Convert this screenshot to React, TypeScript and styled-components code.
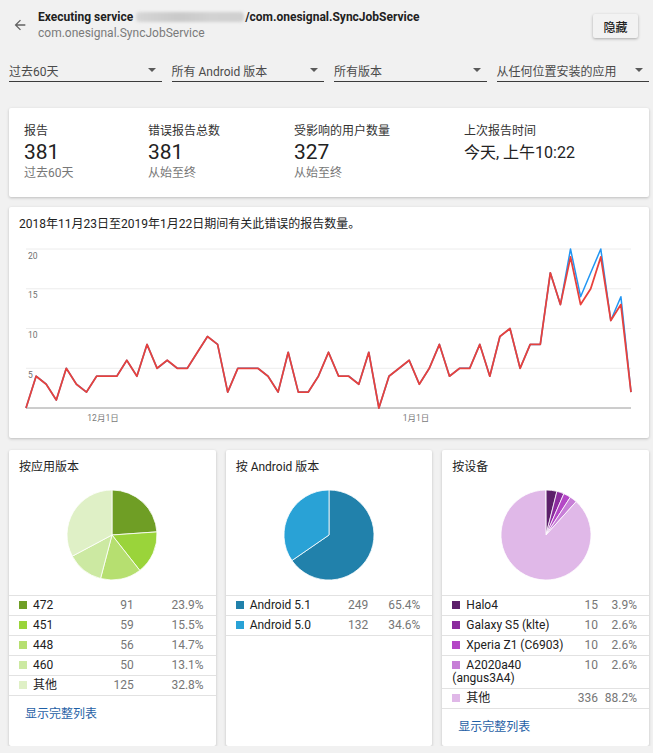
import React from 'react';
import styled, { createGlobalStyle } from 'styled-components';

const GlobalStyle = createGlobalStyle`
  html, body { margin: 0; padding: 0; background: #f1f1f1; }
  body {
    font-family: Roboto, "Noto Sans CJK SC", "Noto Sans", sans-serif;
    color: #212121;
    font-size: 12px;
  }
  * { box-sizing: border-box; }
`;

const Page = styled.div`
  width: 653px;
  padding: 0 4px 0 9px;
`;

const Header = styled.header`
  display: flex;
  align-items: flex-start;
  height: 59px;
  padding-top: 9px;
`;

const BackIcon = styled.svg`
  width: 16px;
  height: 16px;
  margin: 8px 10px 0 3px;
  fill: #616161;
  flex: none;
`;

const TitleBlock = styled.div`
  flex: 1;
  min-width: 0;
`;

const Title = styled.div`
  font-size: 12px;
  font-weight: 700;
  line-height: 16px;
  color: #212121;
  white-space: nowrap;
`;

const Redacted = styled.span`
  display: inline-block;
  width: 108px;
  height: 10px;
  margin: 0 1px 0 3px;
  vertical-align: -1px;
  background: linear-gradient(90deg, #d6d6d6, #c9c9c9 40%, #d2d2d2 70%, #cfcfcf);
  filter: blur(1.5px);
  border-radius: 4px;
`;

const Subtitle = styled.div`
  font-size: 12px;
  line-height: 16px;
  color: #7a7a7a;
`;

const HideButton = styled.button`
  margin: 5px 11px 0 0;
  width: 45px;
  height: 24px;
  border: none;
  border-radius: 2px;
  background: #f2f2f2;
  box-shadow: 0 1px 3px rgba(0, 0, 0, 0.3);
  font-family: inherit;
  font-size: 12px;
  font-weight: 500;
  color: #212121;
  padding: 0;
`;

const FilterRow = styled.div`
  display: grid;
  grid-template-columns: repeat(4, 1fr);
  column-gap: 10px;
`;

const Dropdown = styled.div`
  height: 23px;
  display: flex;
  align-items: center;
  justify-content: space-between;
  border-bottom: 1px solid #3c3c3c;
  font-size: 12px;
  color: #4a4a4a;
  padding-right: 6px;
`;

const Caret = styled.span`
  width: 0;
  height: 0;
  border-left: 4px solid transparent;
  border-right: 4px solid transparent;
  border-top: 4px solid #5a5a5a;
`;

const Card = styled.section`
  background: #fff;
  border-radius: 2px;
  box-shadow: 0 1px 3px rgba(0, 0, 0, 0.22);
`;

const StatsCard = styled(Card)`
  margin-top: 26px;
  height: 89px;
  padding: 15px 15px 0;
  display: grid;
  grid-template-columns: 124px 146px 170px 1fr;
`;

const Stat = styled.div``;

const StatLabel = styled.div`
  font-size: 12px;
  line-height: 17px;
  color: #333;
`;

const StatValue = styled.div<{ $small?: boolean }>`
  font-size: ${(p) => (p.$small ? '16px' : '21px')};
  line-height: 25px;
  color: #222;
`;

const StatSub = styled.div`
  font-size: 12px;
  line-height: 16px;
  color: #777;
`;

const ChartCard = styled(Card)`
  margin-top: 10px;
  height: 231px;
  padding-top: 10px;
`;

const CardTitle = styled.div`
  font-size: 12px;
  line-height: 15px;
  color: #222;
  padding-left: 10px;
`;

const ChartSvg = styled.svg`
  display: block;
  width: 640px;
  height: 206px;
`;

const PieRow = styled.div`
  margin-top: 12px;
  display: grid;
  grid-template-columns: repeat(3, 1fr);
  column-gap: 10px;
`;

const PieCard = styled(Card)`
  height: 296px;
  padding-top: 10px;
`;

const PieArea = styled.div`
  height: 120px;
  display: flex;
  align-items: center;
  justify-content: center;
`;

const Legend = styled.div`
  border-bottom: 1px solid #e2e2e2;
`;

const LegendRow = styled.div<{ $cols: string }>`
  display: grid;
  grid-template-columns: ${(p) => p.$cols};
  border-top: 1px solid #e2e2e2;
  padding: 3px 12px 3px 10px;
  font-size: 12px;
  line-height: 13px;
`;

const LegendLabel = styled.div`
  color: #212121;
`;

const Swatch = styled.span<{ $color: string }>`
  display: inline-block;
  width: 8px;
  height: 8px;
  margin-right: 6px;
  background: ${(p) => p.$color};
  vertical-align: 0;
`;

const Num = styled.div`
  text-align: right;
  color: #767676;
`;

const FullListLink = styled.a`
  display: block;
  margin: 10px 0 0 16px;
  font-size: 12px;
  line-height: 16px;
  color: #1f5fa6;
  text-decoration: none;
`;

type Item = { label: string; count: number; pct: string; color: string };

const appVersions: Item[] = [
  { label: '472', count: 91, pct: '23.9%', color: '#6f9e25' },
  { label: '451', count: 59, pct: '15.5%', color: '#9ad43a' },
  { label: '448', count: 56, pct: '14.7%', color: '#b6df70' },
  { label: '460', count: 50, pct: '13.1%', color: '#cce9a2' },
  { label: '其他', count: 125, pct: '32.8%', color: '#dff0c6' },
];

const androidVersions: Item[] = [
  { label: 'Android 5.1', count: 249, pct: '65.4%', color: '#2181ab' },
  { label: 'Android 5.0', count: 132, pct: '34.6%', color: '#29a2d6' },
];

const devices: Item[] = [
  { label: 'Halo4', count: 15, pct: '3.9%', color: '#5c1f6a' },
  { label: 'Galaxy S5 (klte)', count: 10, pct: '2.6%', color: '#8b2c9e' },
  { label: 'Xperia Z1 (C6903)', count: 10, pct: '2.6%', color: '#b447c6' },
  { label: 'A2020a40 (angus3A4)', count: 10, pct: '2.6%', color: '#c77fd7' },
  { label: '其他', count: 336, pct: '88.2%', color: '#e0b8e8' },
];

const red = [
  0, 4, 3, 1, 5, 3, 2, 4, 4, 4, 6, 4, 8, 5, 6, 5, 5, 7, 9, 8, 2, 5, 5, 5, 4, 2, 7, 2, 2, 4, 7,
  4, 4, 3, 7, 0, 4, 5, 6, 3, 5, 8, 4, 5, 5, 8, 4, 9, 10, 5, 8, 8, 17, 13, 19, 13, 15, 19, 11, 13, 2,
];
const blue = red.map((v, i) => {
  const o: Record<number, number> = { 54: 20, 55: 14, 56: 17, 57: 20, 59: 14 };
  return o[i] ?? v;
});

const X0 = 17;
const X1 = 622;
const Y0 = 176;
const UNIT = 7.95;
const px = (i: number) => X0 + (i * (X1 - X0)) / 60;
const py = (v: number) => Y0 - v * UNIT;
const linePoints = (d: number[]) => d.map((v, i) => `${px(i).toFixed(1)},${py(v).toFixed(1)}`).join(' ');

function slicePath(cx: number, cy: number, r: number, a0: number, a1: number) {
  const t0 = a0 * 2 * Math.PI - Math.PI / 2;
  const t1 = a1 * 2 * Math.PI - Math.PI / 2;
  const x0 = cx + r * Math.cos(t0);
  const y0 = cy + r * Math.sin(t0);
  const x1 = cx + r * Math.cos(t1);
  const y1 = cy + r * Math.sin(t1);
  const large = a1 - a0 > 0.5 ? 1 : 0;
  return `M${cx} ${cy} L${x0.toFixed(2)} ${y0.toFixed(2)} A${r} ${r} 0 ${large} 1 ${x1.toFixed(2)} ${y1.toFixed(2)} Z`;
}

function Pie({ items }: { items: Item[] }) {
  let acc = 0;
  return (
    <svg width="92" height="92" viewBox="0 0 92 92">
      {items.map((it) => {
        const f = parseFloat(it.pct) / 100;
        const d = slicePath(46, 46, 45, acc, acc + f);
        acc += f;
        return <path key={it.label} d={d} fill={it.color} stroke="#fff" strokeWidth="0.8" strokeLinejoin="round" />;
      })}
    </svg>
  );
}

function BreakdownCard({ title, items, cols, link }: { title: string; items: Item[]; cols: string; link?: boolean }) {
  return (
    <PieCard>
      <CardTitle>{title}</CardTitle>
      <PieArea>
        <Pie items={items} />
      </PieArea>
      <Legend>
        {items.map((it) => (
          <LegendRow key={it.label} $cols={cols}>
            <LegendLabel>
              <Swatch $color={it.color} />
              {it.label}
            </LegendLabel>
            <Num>{it.count}</Num>
            <Num>{it.pct}</Num>
          </LegendRow>
        ))}
      </Legend>
      {link && <FullListLink href="#">显示完整列表</FullListLink>}
    </PieCard>
  );
}

function TrendChart() {
  const grid = [20, 15, 10, 5];
  return (
    <ChartSvg viewBox="0 0 640 206">
      {grid.map((g) => (
        <g key={g}>
          <line x1={X0} x2={X1} y1={py(g)} y2={py(g)} stroke="#ececec" strokeWidth="1" />
          <text x={X0 + 2} y={py(g) + 9.5} fontSize="8.5" fill="#6f6f6f" fontFamily="Roboto, sans-serif">
            {g}
          </text>
        </g>
      ))}
      <line x1={X0} x2={X1} y1={Y0} y2={Y0} stroke="#9a9a9a" strokeWidth="1" />
      <polyline points={linePoints(blue)} fill="none" stroke="#2196f3" strokeWidth="1.5" strokeLinejoin="round" />
      <polyline points={linePoints(red)} fill="none" stroke="#e8413c" strokeWidth="1.8" strokeLinejoin="round" />
      <text x={94} y={189} fontSize="8.5" fill="#7a7a7a" textAnchor="middle" fontFamily="Roboto, 'Noto Sans CJK SC', sans-serif">
        12月1日
      </text>
      <text x={407} y={189} fontSize="8.5" fill="#7a7a7a" textAnchor="middle" fontFamily="Roboto, 'Noto Sans CJK SC', sans-serif">
        1月1日
      </text>
    </ChartSvg>
  );
}

export default function App() {
  return (
    <>
      <GlobalStyle />
      <Page>
        <Header>
          <BackIcon viewBox="0 0 24 24">
            <path d="M20 11H7.83l5.59-5.59L12 4l-8 8 8 8 1.41-1.41L7.83 13H20v-2z" />
          </BackIcon>
          <TitleBlock>
            <Title>
              Executing service
              <Redacted />
              /com.onesignal.SyncJobService
            </Title>
            <Subtitle>com.onesignal.SyncJobService</Subtitle>
          </TitleBlock>
          <HideButton>隐藏</HideButton>
        </Header>

        <FilterRow>
          {['过去60天', '所有 Android 版本', '所有版本', '从任何位置安装的应用'].map((f) => (
            <Dropdown key={f}>
              <span>{f}</span>
              <Caret />
            </Dropdown>
          ))}
        </FilterRow>

        <StatsCard>
          <Stat>
            <StatLabel>报告</StatLabel>
            <StatValue>381</StatValue>
            <StatSub>过去60天</StatSub>
          </Stat>
          <Stat>
            <StatLabel>错误报告总数</StatLabel>
            <StatValue>381</StatValue>
            <StatSub>从始至终</StatSub>
          </Stat>
          <Stat>
            <StatLabel>受影响的用户数量</StatLabel>
            <StatValue>327</StatValue>
            <StatSub>从始至终</StatSub>
          </Stat>
          <Stat>
            <StatLabel>上次报告时间</StatLabel>
            <StatValue $small>今天, 上午10:22</StatValue>
          </Stat>
        </StatsCard>

        <ChartCard>
          <CardTitle>2018年11月23日至2019年1月22日期间有关此错误的报告数量。</CardTitle>
          <TrendChart />
        </ChartCard>

        <PieRow>
          <BreakdownCard title="按应用版本" items={appVersions} cols="1fr 40px 70px" link />
          <BreakdownCard title="按 Android 版本" items={androidVersions} cols="1fr 40px 52px" />
          <BreakdownCard title="按设备" items={devices} cols="1fr 30px 39px" link />
        </PieRow>
      </Page>
    </>
  );
}
